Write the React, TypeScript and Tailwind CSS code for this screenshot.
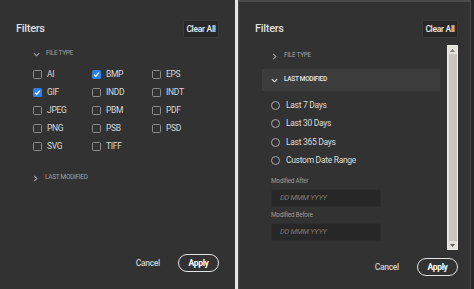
import React from 'react';

const font = { fontFamily: 'Roboto, "Noto Sans", sans-serif' };

function Chevron({ open }: { open: boolean }) {
  return (
    <svg width="7" height="7" viewBox="0 0 8 8" className="shrink-0">
      {open ? (
        <path d="M1 2.5 L4 5.5 L7 2.5" fill="none" stroke="currentColor" strokeWidth="1.3" />
      ) : (
        <path d="M2.5 1 L5.5 4 L2.5 7" fill="none" stroke="currentColor" strokeWidth="1.3" />
      )}
    </svg>
  );
}

function Checkbox({ label, checked }: { label: string; checked?: boolean }) {
  return (
    <div className="flex h-[18px] items-center gap-[5px]">
      {checked ? (
        <span className="flex h-[9px] w-[9px] items-center justify-center rounded-[1.5px] bg-[#2d80e8]">
          <svg width="7" height="7" viewBox="0 0 8 8">
            <path d="M1.2 4.2 L3.2 6 L6.8 1.8" fill="none" stroke="white" strokeWidth="1.5" />
          </svg>
        </span>
      ) : (
        <span className="h-[9px] w-[9px] rounded-[1.5px] border-[1.5px] border-[#8c8c8c]" />
      )}
      <span className="text-[8.5px] text-[#d8d8d8]">{label}</span>
    </div>
  );
}

function Radio({ label }: { label: string }) {
  return (
    <div className="flex h-[18.5px] items-center gap-[6px]">
      <span className="h-[9px] w-[9px] rounded-full border border-[#a8a8a8]" />
      <span className="text-[8.5px] text-[#dcdcdc]">{label}</span>
    </div>
  );
}

function Header() {
  return (
    <div className="flex h-[18px] items-center justify-between">
      <span className="text-[11px] font-medium text-[#dedede]">Filters</span>
      <button className="flex h-[18px] w-[36px] items-center justify-center rounded-[2px] border border-[#3a3a3a] bg-[#272727] text-[8.5px] font-medium text-[#eeeeee]">
        Clear All
      </button>
    </div>
  );
}

function Footer() {
  return (
    <div className="flex items-center justify-end gap-[18px]">
      <span className="text-[8.5px] font-medium text-[#cfcfcf]">Cancel</span>
      <button className="flex h-[18px] w-[41px] items-center justify-center rounded-full border-[1.5px] border-[#e4e4e4] text-[8.5px] font-bold text-white">
        Apply
      </button>
    </div>
  );
}

const fileTypes = [
  ['AI', false], ['BMP', true], ['EPS', false],
  ['GIF', true], ['INDD', false], ['INDT', false],
  ['JPEG', false], ['PBM', false], ['PDF', false],
  ['PNG', false], ['PSB', false], ['PSD', false],
  ['SVG', false], ['TIFF', false],
] as const;

function DateInput() {
  return (
    <div className="flex h-[18px] w-[110px] items-center rounded-[2px] border border-[#2e2e2e] bg-[#272727] pl-[8px] text-[7.5px] italic text-[#7a7a7a]">
      DD MMM YYYY
    </div>
  );
}

export default function App() {
  return (
    <div className="flex h-[289px] w-[474px] overflow-hidden bg-[#2b2b2b] tracking-[-0.3px]" style={font}>
      {/* Left panel */}
      <div className="flex w-[235px] flex-col bg-[#323232] pb-[17px] pl-[16px] pr-[16px] pt-[20px]">
        <Header />
        <div className="mt-[11px] flex h-[10px] items-center gap-[6px] pl-[17px] text-[#a0a0a0]">
          <Chevron open />
          <span className="text-[6.5px] uppercase">File Type</span>
        </div>
        <div className="mt-[6px] grid grid-cols-[59px_60px_60px] pl-[17px]">
          {fileTypes.map(([label, checked]) => (
            <Checkbox key={label} label={label} checked={checked} />
          ))}
        </div>
        <div className="mt-[18px] flex h-[10px] items-center gap-[6px] pl-[16px] text-[#a0a0a0]">
          <Chevron open={false} />
          <span className="text-[6.5px] uppercase">Last Modified</span>
        </div>
        <div className="mt-auto">
          <Footer />
        </div>
      </div>

      {/* Divider */}
      <div className="w-[3px] bg-[#e6e6e6]" />

      {/* Right panel */}
      <div className="flex w-[233px] flex-col border-l border-t-2 border-r border-[#4a4a4a] bg-[#323232] pb-[13px] pl-[16px] pr-[12px] pt-[18px]">
        <Header />
        <div className="mt-[7px] flex h-[205px]">
          <div className="flex flex-1 flex-col pl-[7px] pr-[7px] pt-[6px]">
            <div className="flex h-[10px] items-center gap-[6px] pl-[9px] text-[#a0a0a0]">
              <Chevron open={false} />
              <span className="text-[6.5px] uppercase">File Type</span>
            </div>
            <div className="mt-[8px] flex h-[22px] items-center gap-[6px] bg-[#3c3c3c] pl-[9px] text-[#e8e8e8]">
              <Chevron open />
              <span className="text-[6.5px] font-medium uppercase">Last Modified</span>
            </div>
            <div className="mt-[5px] flex flex-col pl-[9px]">
              <Radio label="Last 7 Days" />
              <Radio label="Last 30 Days" />
              <Radio label="Last 365 Days" />
              <Radio label="Custom Date Range" />
              <span className="mt-[7px] text-[6.5px] text-[#9a9a9a]">Modified After</span>
              <div className="mt-[2px]">
                <DateInput />
              </div>
              <span className="mt-[4px] text-[6.5px] text-[#9a9a9a]">Modified Before</span>
              <div className="mt-[2px]">
                <DateInput />
              </div>
            </div>
          </div>
          {/* Scrollbar */}
          <div className="flex w-[11px] flex-col items-center border border-[#eeeeee] bg-[#e4e2dd]">
            <div className="flex h-[8px] items-center justify-center">
              <svg width="5" height="3" viewBox="0 0 5 3">
                <path d="M0 3 L2.5 0 L5 3 Z" fill="#7a7a7a" />
              </svg>
            </div>
            <div className="w-[8px] flex-1 bg-[#c8c6bf]" />
            <div className="flex h-[8px] items-center justify-center">
              <svg width="5" height="3" viewBox="0 0 5 3">
                <path d="M0 0 L2.5 3 L5 0 Z" fill="#5a5a5a" />
              </svg>
            </div>
          </div>
        </div>
        <div className="mt-auto">
          <Footer />
        </div>
      </div>
      <div className="flex-1 bg-[#262626]" />
    </div>
  );
}
